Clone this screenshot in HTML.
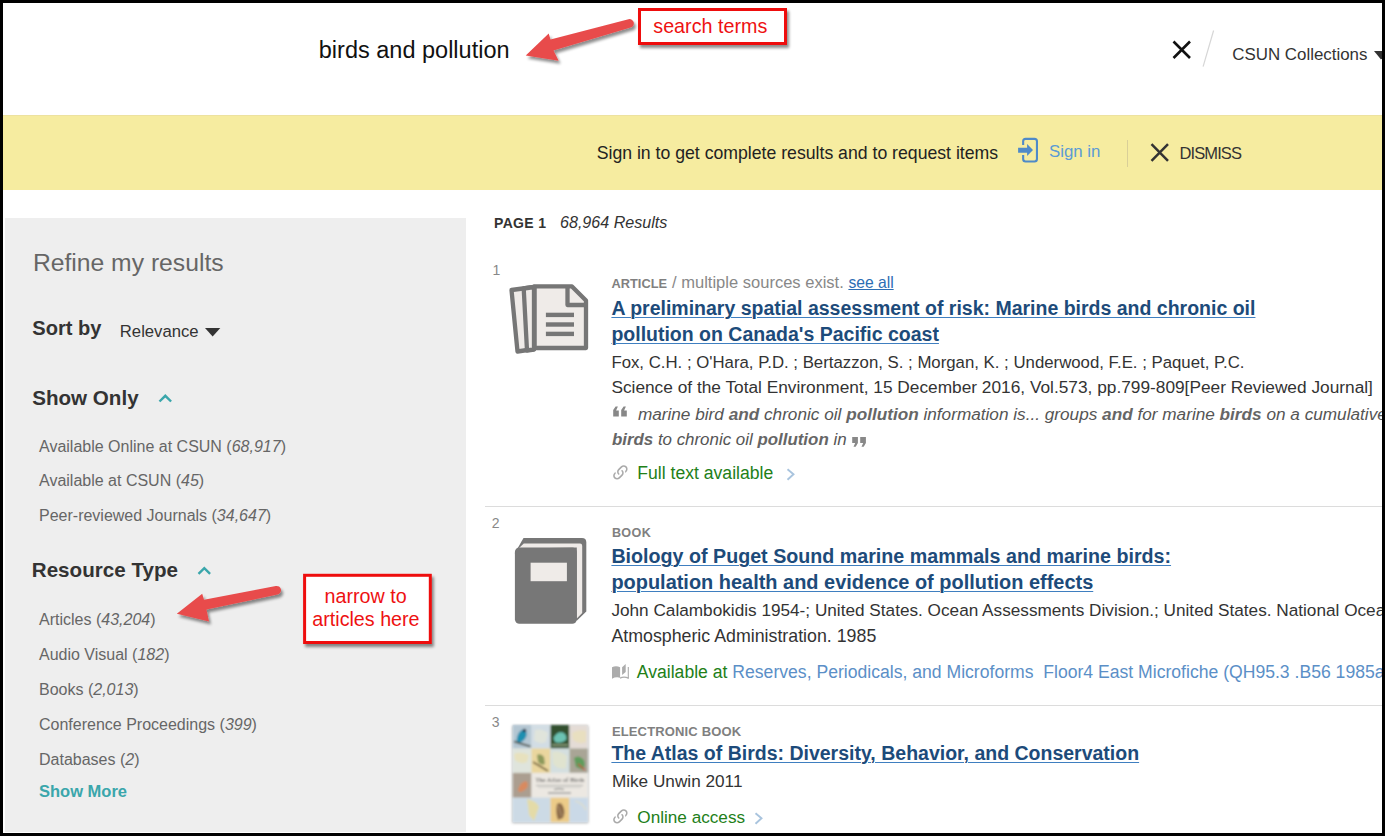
<!DOCTYPE html><html><head><meta charset="utf-8"><style>
*{margin:0;padding:0;box-sizing:border-box}
html,body{width:1385px;height:836px;overflow:hidden;background:#000}
body{font-family:"Liberation Sans",sans-serif;position:relative}
#frame{position:absolute;left:3px;top:3px;width:1379px;height:830px;background:#fff;overflow:hidden}
.t{position:absolute;line-height:1;white-space:nowrap}
.abs{position:absolute}
i{font-style:italic}
b{font-weight:bold}
</style></head><body><div id="frame"><div class="abs" style="left:-3px;top:-3px;width:1385px;height:836px">
<div class="t " style="left:318.80px;top:39.00px;font-size:23.5px;color:#111">birds and pollution</div>
<svg class="abs" style="left:1170px;top:38px" width="24" height="24" viewBox="0 0 24 24"><path d="M3.5 3.5L20 20M20 3.5L3.5 20" stroke="#111" stroke-width="2.6" fill="none"/></svg>
<svg class="abs" style="left:1200px;top:28px" width="18" height="42"><line x1="13.6" y1="2.5" x2="3.1" y2="38.7" stroke="#d6d6d6" stroke-width="1.2"/></svg>
<div class="t " style="left:1232.30px;top:47.00px;font-size:16.9px;color:#333">CSUN Collections</div>
<svg class="abs" style="left:1372px;top:48px" width="16" height="14"><path d="M2 3L16 3L9 11.5Z" fill="#333"/></svg>
<div class="abs" style="left:3px;top:115px;width:1380px;height:75px;background:#f6eca0;border-top:1px solid #ede2a0"></div>
<div class="t " style="left:596.70px;top:145.00px;font-size:17.67px;color:#222">Sign in to get complete results and to request items</div>
<svg class="abs" style="left:1012px;top:134px" width="32" height="32" viewBox="0 0 32 32"><path d="M11.15 10.9V7.35Q11.15 4.85 13.65 4.85H22.45Q24.95 4.85 24.95 7.35V24.95Q24.95 27.45 22.45 27.45H13.65Q11.15 27.45 11.15 24.95V21" stroke="#4f8ac8" stroke-width="2.1" fill="none"/><path d="M6.1 13.8H15.1V10.1L21 16L15.1 22V18.8H6.1Z" fill="#4f8ac8"/></svg>
<div class="t " style="left:1049.00px;top:144.00px;font-size:16.84px;color:#5b9bd5">Sign in</div>
<div class="abs" style="left:1127px;top:139.5px;width:1px;height:27px;background:#d9cf98"></div>
<svg class="abs" style="left:1148px;top:141px" width="24" height="24" viewBox="0 0 24 24"><path d="M3.5 3.2L20 19.8M20 3.2L3.5 19.8" stroke="#333" stroke-width="2.5" fill="none"/></svg>
<div class="t " style="left:1179.50px;top:145.00px;font-size:16.5px;color:#333;letter-spacing:-0.9px">DISMISS</div>
<div class="abs" style="left:5px;top:218px;width:461px;height:614px;background:#eeeeee"></div>
<div class="t " style="left:32.90px;top:251.00px;font-size:24.7px;color:#666">Refine my results</div>
<div class="t " style="left:32.30px;top:318.00px;font-size:20.1px;color:#333;font-weight:bold">Sort by</div>
<div class="t " style="left:119.80px;top:324.00px;font-size:16.7px;color:#333">Relevance</div>
<svg class="abs" style="left:203px;top:326px" width="20" height="13"><path d="M2 2H17.3L9.65 10.6Z" fill="#333"/></svg>
<div class="t " style="left:32.20px;top:388.00px;font-size:20.6px;color:#333;font-weight:bold">Show Only</div>
<svg class="abs" style="left:156px;top:392px" width="20" height="14"><path d="M3.5 9.5L9.3 3.8L15.1 9.5" stroke="#3aa6ab" stroke-width="2.4" fill="none"/></svg>
<div class="t " style="left:39.00px;top:439.00px;font-size:16.0px;color:#666">Available Online at CSUN (<i>68,917</i>)</div>
<div class="t " style="left:39.00px;top:473.00px;font-size:16.0px;color:#666">Available at CSUN (<i>45</i>)</div>
<div class="t " style="left:39.00px;top:508.00px;font-size:16.0px;color:#666">Peer-reviewed Journals (<i>34,647</i>)</div>
<div class="t " style="left:31.80px;top:560.00px;font-size:20.6px;color:#333;font-weight:bold">Resource Type</div>
<svg class="abs" style="left:195px;top:564px" width="20" height="14"><path d="M3.5 9.8L9.3 4.1L15.1 9.8" stroke="#3aa6ab" stroke-width="2.4" fill="none"/></svg>
<div class="t " style="left:39.00px;top:612.00px;font-size:16.0px;color:#666">Articles (<i>43,204</i>)</div>
<div class="t " style="left:39.00px;top:647.00px;font-size:16.0px;color:#666">Audio Visual (<i>182</i>)</div>
<div class="t " style="left:39.00px;top:682.00px;font-size:16.0px;color:#666">Books (<i>2,013</i>)</div>
<div class="t " style="left:39.00px;top:717.00px;font-size:16.0px;color:#666">Conference Proceedings (<i>399</i>)</div>
<div class="t " style="left:39.00px;top:752.00px;font-size:16.0px;color:#666">Databases (<i>2</i>)</div>
<div class="t " style="left:39.00px;top:783.00px;font-size:16.5px;color:#3aa6ab;font-weight:bold">Show More</div>
<div class="t " style="left:494.00px;top:216.00px;font-size:14px;color:#333;font-weight:bold;letter-spacing:0.35px">PAGE 1</div>
<div class="t " style="left:560.00px;top:214.00px;font-size:16.1px;color:#333;font-style:italic">68,964 Results</div>
<div class="t " style="left:492.50px;top:263.00px;font-size:14px;color:#888">1</div>
<svg class="abs" style="left:500px;top:276px" width="96" height="86" viewBox="500 276 96 86">
<g stroke="#767676" stroke-width="4.3" stroke-linejoin="round" fill="#efebe8">
<path d="M511.5 290L534 287V349L517.5 351.5Z"/>
<path d="M523.7 288.5L534 287V349.5L527 350.5Z"/>
<path d="M534.6 286.4H572L586 300.4V348H534.6Z"/>
<path d="M567.5 286.4V305H586" fill="none"/>
</g>
<g fill="#767676"><rect x="545.9" y="312.7" width="28.1" height="4.4"/><rect x="545.9" y="322.3" width="28.1" height="4.4"/><rect x="545.9" y="331.7" width="28.1" height="4.4"/></g>
</svg>
<div class="t " style="left:611.40px;top:278.00px;font-size:12.8px;color:#808080;font-weight:bold;letter-spacing:0.05px">ARTICLE</div>
<div class="t " style="left:672.00px;top:275.00px;font-size:16.55px;color:#888">/ multiple sources exist.</div>
<div class="t " style="left:848.40px;top:275.00px;font-size:15.67px;color:#2c6db3;text-decoration:underline">see all</div>
<div class="t " style="left:611.40px;top:299.00px;font-size:19.5px;color:#1d4b7a;font-weight:bold;text-decoration:underline;text-decoration-color:#3f7fc0;text-decoration-thickness:1px;text-underline-offset:2px">A preliminary spatial assessment of risk: Marine birds and chronic oil</div>
<div class="t " style="left:611.40px;top:325.00px;font-size:19.5px;color:#1d4b7a;font-weight:bold;text-decoration:underline;text-decoration-color:#3f7fc0;text-decoration-thickness:1px;text-underline-offset:2px">pollution on Canada's Pacific coast</div>
<div class="t " style="left:611.40px;top:355.00px;font-size:16.8px;color:#333">Fox, C.H. ; O'Hara, P.D. ; Bertazzon, S. ; Morgan, K. ; Underwood, F.E. ; Paquet, P.C.</div>
<div class="t " style="left:611.40px;top:379.00px;font-size:17.3px;color:#333">Science of the Total Environment, 15 December 2016, Vol.573, pp.799-809[Peer Reviewed Journal]</div>
<svg class="abs" style="left:608px;top:402px" width="24" height="20" viewBox="0 0 24 20"><g fill="#888"><path d="M5.2 14.6V8.1L7.6 4.4H9.9L8.1 8.6H10.8V14.6Z"/><path d="M13.2 14.6V8.1L15.6 4.4H17.9L16.1 8.6H18.8V14.6Z"/></g></svg>
<div class="t " style="left:637.90px;top:406.00px;font-size:17.2px;color:#555;font-style:italic">marine bird <b style="color:#666">and</b> chronic oil <b style="color:#666">pollution</b> information is... groups <b style="color:#666">and</b> for marine <b style="color:#666">birds</b> on a cumulative</div>
<div class="t " style="left:611.90px;top:432.00px;font-size:16.9px;color:#555;font-style:italic"><b style="color:#666">birds</b> to chronic oil <b style="color:#666">pollution</b> in</div>
<svg class="abs" style="left:846px;top:426px" width="24" height="24" viewBox="0 0 24 24"><g fill="#888"><path d="M6.2 11V17H9.2L7.5 20.7H9.7L11.9 17V11Z"/><path d="M14.2 11V17H17.2L15.5 20.7H17.7L19.9 17V11Z"/></g></svg>
<svg class="abs" style="left:611.1px;top:463.1px" width="18" height="18" viewBox="0 0 23 23"><path fill="#aaa" d="M10.59,13.41C11,13.8 11,14.44 10.59,14.83C10.2,15.22 9.56,15.22 9.17,14.83C7.22,12.88 7.22,9.710 9.17,7.76L12.71,4.22C14.66,2.27 17.83,2.27 19.78,4.22C21.73,6.17 21.73,9.34 19.78,11.29L18.29,12.78C18.3,11.96 18.17,11.14 17.89,10.36L18.36,9.88C19.54,8.71 19.54,6.81 18.36,5.64C17.19,4.46 15.29,4.460 14.12,5.64L10.59,9.17C9.41,10.34 9.41,12.24 10.59,13.41M13.41,9.17C13.8,8.78 14.44,8.78 14.83,9.17C16.78,11.12 16.78,14.29 14.83,16.24L11.29,19.78C9.34,21.73 6.17,21.73 4.22,19.78C2.27,17.830 2.27,14.66 4.22,12.71L5.71,11.22C5.7,12.04 5.83,12.86 6.11,13.65L5.64,14.12C4.46,15.29 4.46,17.19 5.64,18.36C6.81,19.54 8.71,19.54 9.88,18.36L13.41,14.83C14.59,13.66 14.59,11.76 13.41,10.59C13,10.2 13,9.56 13.41,9.17Z"/></svg>
<div class="t " style="left:637.30px;top:465.00px;font-size:17.6px;color:#228018">Full text available</div>
<svg class="abs" style="left:784px;top:466px" width="12" height="17"><path d="M3.5 3.2L9.5 8.3L3.5 13.8" stroke="#a9c4de" stroke-width="1.9" fill="none"/></svg>
<div class="abs" style="left:485px;top:506px;width:900px;height:1px;background:#dcdcdc"></div>
<div class="t " style="left:491.80px;top:516.00px;font-size:14px;color:#888">2</div>
<svg class="abs" style="left:510px;top:534px" width="82" height="94" viewBox="510 534 82 94">
<path d="M514.9 553L523.5 538.1H582Q586.3 538.1 586.3 542.4V611.5L577 620.5H520Z" fill="#777"/>
<path d="M518.5 548.5L523.8 543.5H580Q582.2 543.5 582.2 545.7V613L576.8 618.5V547.4Z" fill="#efebe8"/>
<rect x="514.9" y="547.4" width="61.9" height="76.3" rx="4.5" fill="#777"/>
<rect x="530.6" y="562.7" width="36.3" height="18.5" fill="#efebe8"/>
</svg>
<div class="t " style="left:611.90px;top:527.00px;font-size:12.6px;color:#808080;font-weight:bold;letter-spacing:0.35px">BOOK</div>
<div class="t " style="left:611.40px;top:547.00px;font-size:19.68px;color:#1d4b7a;font-weight:bold;text-decoration:underline;text-decoration-color:#3f7fc0;text-decoration-thickness:1px;text-underline-offset:2px">Biology of Puget Sound marine mammals and marine birds:</div>
<div class="t " style="left:611.40px;top:573.00px;font-size:19.94px;color:#1d4b7a;font-weight:bold;text-decoration:underline;text-decoration-color:#3f7fc0;text-decoration-thickness:1px;text-underline-offset:2px">population health and evidence of pollution effects</div>
<div class="t " style="left:611.40px;top:602.00px;font-size:17.2px;color:#333">John Calambokidis 1954-; United States. Ocean Assessments Division.; United States. National Oceanic and</div>
<div class="t " style="left:611.40px;top:628.00px;font-size:17.8px;color:#333">Atmospheric Administration. 1985</div>
<svg class="abs" style="left:608px;top:660px" width="24" height="24" viewBox="0 0 24 24"><g fill="#acacac"><path d="M4 7.2Q8 5.2 12.1 7.2V17.7Q8 16.4 4 18.7Z"/><path d="M14.1 7.2L17.7 4V12.1L14.1 14.9Z"/><rect x="19.75" y="7" width="1.1" height="11.7"/></g><path d="M12 18.1Q16 16.2 20.5 18.2" stroke="#acacac" stroke-width="1.3" fill="none"/></svg>
<div class="t " style="left:636.80px;top:664.00px;font-size:17.6px;"><span style="color:#228018">Available at </span><span style="color:#5b8fc7">Reserves, Periodicals, and Microforms&nbsp; Floor4 East Microfiche (QH95.3 .B56 1985a)</span></div>
<div class="abs" style="left:485px;top:705px;width:900px;height:1px;background:#dcdcdc"></div>
<div class="t " style="left:491.80px;top:715.00px;font-size:14px;color:#888">3</div>
<svg class="abs" style="left:506px;top:720px" width="90" height="110" viewBox="506 720 90 110">
<defs><filter id="csh" x="-20%" y="-20%" width="140%" height="140%"><feGaussianBlur stdDeviation="1.6"/></filter><filter id="bl" x="-5%" y="-5%" width="110%" height="110%"><feGaussianBlur stdDeviation="0.9"/></filter></defs>
<rect x="512.3" y="725.8" width="76" height="97.4" fill="#000" opacity="0.25" filter="url(#csh)"/>
<rect x="512.8" y="725" width="75" height="97.2" fill="#dfe5ea"/>
<g filter="url(#bl)">
<rect x="512.8" y="725" width="18.7" height="23.5" fill="#b4c6d2"/>
<path d="M516.5 740Q518 731 523 729.5Q527.5 730 526.5 736Q524 742 518 743Z" fill="#1d8fb0"/>
<circle cx="524.5" cy="730.5" r="1.8" fill="#1a2a40"/>
<path d="M514 741.5L530.5 746.5" stroke="#3b3a2a" stroke-width="1.4"/>
<rect x="531.5" y="725" width="19" height="23.5" fill="#d2dde4"/>
<path d="M535 730Q542 728 548 733L546 742Q539 745 534 740Z" fill="#e3e6d8" opacity="0.8"/>
<rect x="550.5" y="725" width="19" height="23.5" fill="#33502e"/>
<path d="M553.5 738Q557 731 563 732.5Q567.5 735 566 740Q561 744 555 742Z" fill="#6cc3b3"/>
<path d="M552 745H568" stroke="#9aa888" stroke-width="1.5"/>
<rect x="569.5" y="725" width="18.3" height="23.5" fill="#e4dcd6"/>
<path d="M572 733Q578 729 586 731V742Q579 745 573 740Z" fill="#eadfb6" opacity="0.7"/>
<rect x="512.8" y="748.5" width="18.7" height="24.4" fill="#dfe4dc"/>
<path d="M514 754Q520 751 529 755L527 762Q520 765 515 760Z" fill="#e9e0b0" opacity="0.7"/>
<rect x="531.5" y="748.5" width="19" height="24.4" fill="#ead69e"/>
<path d="M537 755Q541 753 544 757L545 764Q541 766 538 762Z" fill="#8d9a5c"/>
<path d="M533 762L548 771" stroke="#6a5a30" stroke-width="1.5"/>
<rect x="550.5" y="748.5" width="19" height="24.4" fill="#d4dfe0"/>
<path d="M552 752Q560 750 567 756L566 768Q558 770 553 764Z" fill="#e6e4c8" opacity="0.7"/>
<rect x="569.5" y="748.5" width="18.3" height="24.4" fill="#a9a596"/>
<path d="M574 758Q579 754 584 760Q586 766 583 770L576 767Z" fill="#5f9c5c"/>
<path d="M578 764L585 770" stroke="#c85040" stroke-width="1.5"/>
<rect x="512.8" y="772.9" width="18.7" height="24.8" fill="#ab9e90"/>
<path d="M518 790Q520 782 526 781Q529 783 527 788Q523 792 519 792Z" fill="#d98a5e"/>
<rect x="531.5" y="772.9" width="56.3" height="24.8" fill="#ece8e2"/>
<text x="559.8" y="782.4" font-family="Liberation Serif" font-size="6.7" fill="#4a4a4a" text-anchor="middle">The Atlas of Birds</text>
<rect x="536" y="785" width="47" height="0.8" fill="#999"/>
<rect x="538" y="787" width="43" height="0.6" fill="#bbb"/>
<path d="M554 789.5Q559 788 564 789.5" stroke="#555" stroke-width="0.7" fill="none"/>
<rect x="548" y="792.5" width="23" height="1" fill="#777"/>
<rect x="512.8" y="797.7" width="37.7" height="24.5" fill="#ccdae5"/>
<path d="M527 799Q537 801 539 807L534 821L529 815L528 806Z" fill="#e4dba8"/>
<rect x="550.5" y="797.7" width="19" height="24.5" fill="#eccb88"/>
<path d="M557 804Q561 801 563 806Q566 812 563 818L558 820Q555 812 557 804Z" fill="#8d6c4a"/>
<path d="M558 806L562 816" stroke="#d8c8a8" stroke-width="0.8" stroke-dasharray="1 1"/>
<rect x="569.5" y="797.7" width="18.3" height="24.5" fill="#cad9e7"/>
<path d="M575 801Q583 803 586 810" stroke="#e8e0c0" stroke-width="1.2" fill="none" opacity="0.8"/>
</g>
</svg>
<div class="t " style="left:611.90px;top:725.00px;font-size:13.0px;color:#808080;font-weight:bold;letter-spacing:0.15px">ELECTRONIC BOOK</div>
<div class="t " style="left:611.40px;top:744.00px;font-size:19.5px;color:#1d4b7a;font-weight:bold;text-decoration:underline;text-decoration-color:#3f7fc0;text-decoration-thickness:1px;text-underline-offset:2px">The Atlas of Birds: Diversity, Behavior, and Conservation</div>
<div class="t " style="left:611.90px;top:773.00px;font-size:17.2px;color:#333">Mike Unwin 2011</div>
<svg class="abs" style="left:611.1px;top:807.4px" width="18" height="18" viewBox="0 0 23 23"><path fill="#aaa" d="M10.59,13.41C11,13.8 11,14.44 10.59,14.83C10.2,15.22 9.56,15.22 9.17,14.83C7.22,12.88 7.22,9.710 9.17,7.76L12.71,4.22C14.66,2.27 17.83,2.27 19.78,4.22C21.73,6.17 21.73,9.34 19.78,11.29L18.29,12.78C18.3,11.96 18.17,11.14 17.89,10.36L18.36,9.88C19.54,8.71 19.54,6.81 18.36,5.64C17.19,4.46 15.29,4.460 14.12,5.64L10.59,9.17C9.41,10.34 9.41,12.24 10.59,13.41M13.41,9.17C13.8,8.78 14.44,8.78 14.83,9.17C16.78,11.12 16.78,14.29 14.83,16.24L11.29,19.78C9.34,21.73 6.17,21.73 4.22,19.78C2.27,17.830 2.27,14.66 4.22,12.71L5.71,11.22C5.7,12.04 5.83,12.86 6.11,13.65L5.64,14.12C4.46,15.29 4.46,17.19 5.64,18.36C6.81,19.54 8.71,19.54 9.88,18.36L13.41,14.83C14.59,13.66 14.59,11.76 13.41,10.59C13,10.2 13,9.56 13.41,9.17Z"/></svg>
<div class="t " style="left:637.30px;top:809.00px;font-size:17.16px;color:#228018">Online access</div>
<svg class="abs" style="left:752px;top:810px" width="12" height="17"><path d="M3.5 3.2L9.5 8.3L3.5 13.8" stroke="#a9c4de" stroke-width="1.9" fill="none"/></svg>
<svg class="abs" style="left:0;top:0" width="1385" height="836">
<defs><filter id="sh" x="-20%" y="-20%" width="140%" height="140%"><feGaussianBlur in="SourceAlpha" stdDeviation="1.5"/><feOffset dx="2" dy="3"/><feComponentTransfer><feFuncA type="linear" slope="0.45"/></feComponentTransfer><feMerge><feMergeNode/><feMergeNode in="SourceGraphic"/></feMerge></filter></defs>
<g filter="url(#sh)" fill="#e84c4c">
<path d="M525.7 55.5L548.7 33.5L550.5 39.5L628.5 19.2A4.3 4.3 0 0 1 630.6 27.6L553.5 50.5L558.6 60.7Z"/>
<path d="M176.8 613.7L202.2 593.8L204 599.8L275.8 586A4.3 4.3 0 0 1 277.6 594.5L206.5 609.5L209 621.5Z"/>
<rect x="639.5" y="9.5" width="146" height="34" fill="#fff" stroke="#ee1111" stroke-width="3"/>
<rect x="304.6" y="575.3" width="125.7" height="67.2" fill="#fff" stroke="#ee1111" stroke-width="3"/>
</g>
</svg>
<div class="t " style="left:653.30px;top:17.00px;font-size:19.73px;color:#ee1111">search terms</div>
<div class="t " style="left:324.60px;top:587.00px;font-size:19.7px;color:#ee1111">narrow to</div>
<div class="t " style="left:312.30px;top:610.00px;font-size:19.7px;color:#ee1111">articles here</div>
</div></div></body></html>
